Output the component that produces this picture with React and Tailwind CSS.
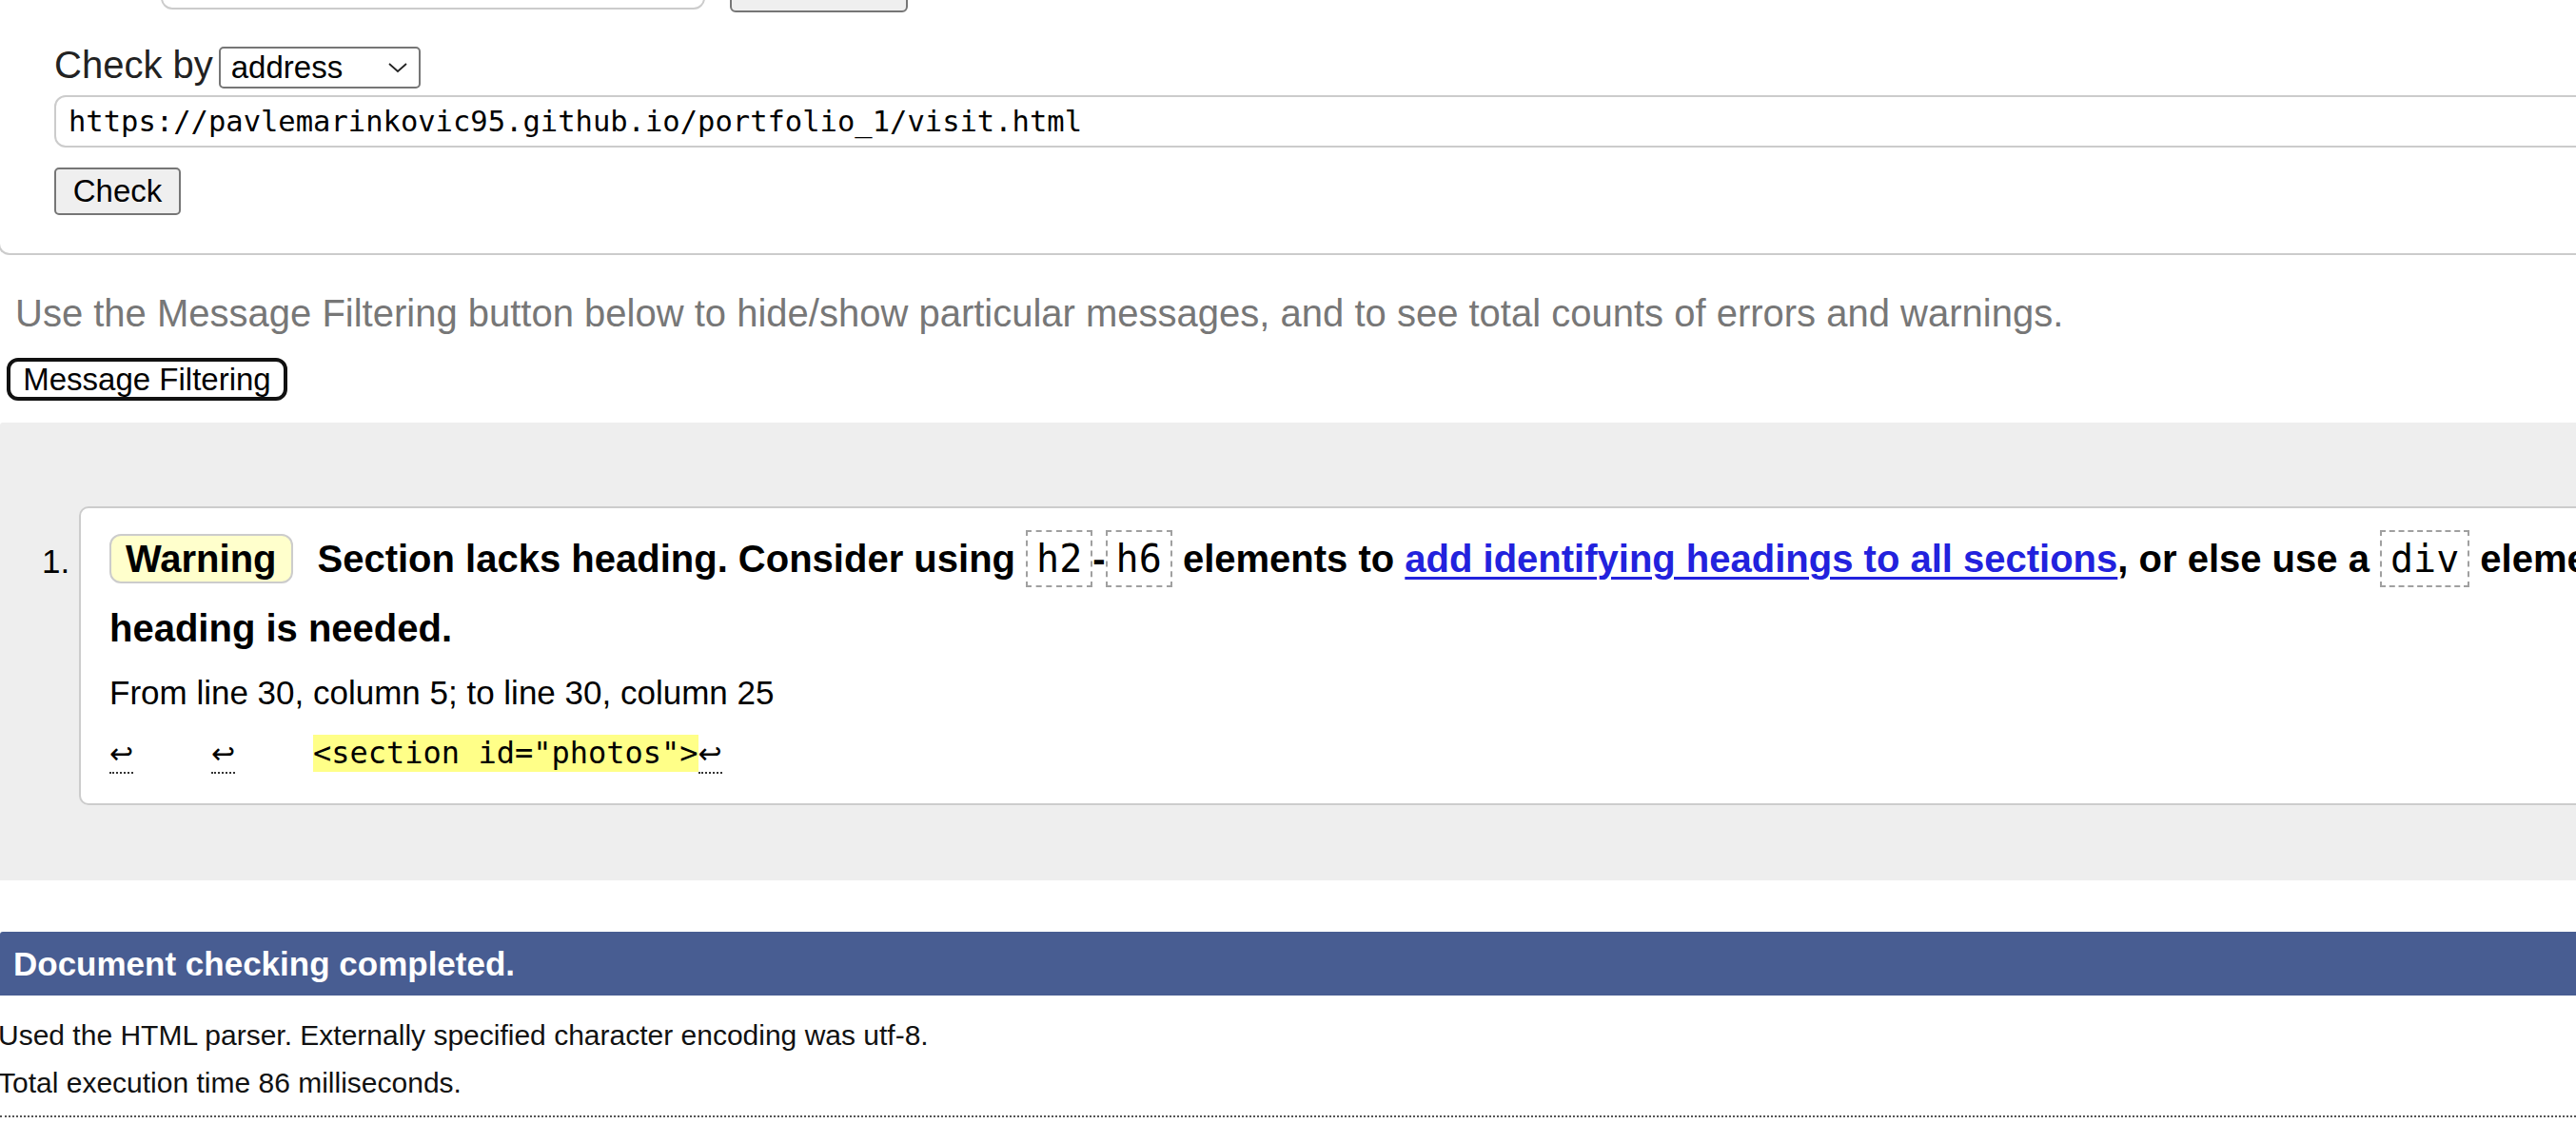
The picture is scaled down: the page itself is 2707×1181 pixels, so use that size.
import React from 'react';

const Code = ({ children }) => (
  <code className="inline-block border-2 border-dashed border-[#a0a0a0] px-[9px] leading-[56px] font-['DejaVu_Sans_Mono',monospace] font-normal text-[40px]">
    {children}
  </code>
);

const NewLine = ({ wide }) => (
  <span className={wide ? 'inline-block w-[107px]' : 'inline-block'}>
    <span className="inline-block h-[41px] border-b-2 border-dotted border-[#333] font-['DejaVu_Sans',sans-serif] text-[30px] leading-[39px]">
      ↩
    </span>
  </span>
);

export default function App() {
  return (
    <div className="w-[2707px] h-[1181px] overflow-hidden bg-white text-black font-['Liberation_Sans',Arial,sans-serif]">
      {/* form box */}
      <div className="-ml-[2px] border-b-2 border-l-2 border-[#ccc] rounded-bl-[12px] pb-[40px]">
        {/* previous row, scrolled mostly out of view */}
        <div className="flex items-end h-[13px] overflow-hidden pl-[169px]">
          <div className="w-[572px] h-[50px] mb-[3px] border-2 border-[#ccc] rounded-[12px] bg-white" />
          <div className="ml-[26px] w-[187px] h-[50px] border-2 border-[#767676] rounded-[6px] bg-[#efefef]" />
        </div>

        <div className="flex items-start mt-[36px] pl-[57px] h-[44px]">
          <span className="text-[40px] leading-[38px] text-[#222]">Check by</span>
          <div className="ml-[6px] w-[212px] h-[44px] border-2 border-[#767676] rounded-[5px] flex items-center justify-between pl-[11px] pr-[11px]">
            <span className="text-[33px] leading-[40px]">address</span>
            <svg width="22" height="14" viewBox="0 0 22 14" fill="none">
              <path d="M2 3l9 8 9-8" stroke="#222" strokeWidth="1.8" />
            </svg>
          </div>
        </div>

        <div className="mt-[7px] ml-[57px] w-[2800px] h-[55px] border-2 border-[#ccc] rounded-[12px] flex items-center pl-[13px]">
          <span className="font-['DejaVu_Sans_Mono',monospace] text-[30.5px] leading-[36px]">
            https://pavlemarinkovic95.github.io/portfolio_1/visit.html
          </span>
        </div>

        <div className="mt-[21px] ml-[57px] w-[133px] h-[50px] border-2 border-[#767676] rounded-[5px] bg-[#efefef] flex items-center justify-center">
          <span className="text-[33px] leading-[40px]">Check</span>
        </div>
      </div>

      <p className="mt-[41px] pl-[16px] text-[40px] leading-[40px] text-[#777] whitespace-nowrap">
        Use the Message Filtering button below to hide/show particular messages, and to see total counts of errors and warnings.
      </p>

      <div className="mt-[27px] ml-[7px] w-[295px] h-[45px] border-4 border-[#111] rounded-[12px] bg-white flex items-center justify-center">
        <span className="text-[33px] leading-[38px]">Message Filtering</span>
      </div>

      {/* results */}
      <div className="mt-[23px] h-[481px] bg-[#eee] pt-[88px] rounded-tl-[3px]">
        <div className="flex items-start">
          <div className="shrink-0 pl-[44px] w-[83px] mt-[38px] text-[35px] leading-[40px]">1.</div>
          <div className="shrink-0 w-[3600px] border-2 border-[#ccc] rounded-[10px] bg-white pl-[30px] pt-[17px] pb-[29px]">
            <p className="font-bold text-[40px] leading-[73px] whitespace-nowrap">
              <span className="inline-block mr-[26px] px-[15px] leading-[48px] bg-[#ffffcc] border-2 border-[#ccc] rounded-[12px]">
                Warning
              </span>
              Section lacks heading. Consider using <Code>h2</Code>-<Code>h6</Code> elements to{' '}
              <a className="text-[#2222dd] underline decoration-[3px] underline-offset-[5px]">
                add identifying headings to all sections
              </a>
              , or else use a <Code>div</Code> element instead for any cases where no
              <br />
              heading is needed.
            </p>
            <p className="mt-[11px] text-[35px] leading-[40px]">From line 30, column 5; to line 30, column 25</p>
            <div className="mt-[24px] flex items-start h-[43px] font-['DejaVu_Sans_Mono',monospace] text-[32px] leading-[39px]">
              <NewLine wide />
              <NewLine wide />
              <span className="bg-[#ffff88] whitespace-pre">&lt;section id="photos"&gt;</span>
              <NewLine />
            </div>
          </div>
        </div>
      </div>

      <div className="mt-[54px] h-[67px] bg-[#485d92] rounded-tl-[3px] flex items-center pl-[14px]">
        <span className="text-white font-bold text-[35px] leading-[40px]">Document checking completed.</span>
      </div>

      <p className="mt-[22px] -ml-[2px] text-[30px] leading-[40px] text-[#111] whitespace-nowrap">
        Used the HTML parser. Externally specified character encoding was utf-8.
      </p>
      <p className="mt-[10px] -ml-[2px] text-[30px] leading-[40px] text-[#111] whitespace-nowrap">
        Total execution time 86 milliseconds.
      </p>
      <div className="mt-[14px] border-b-2 border-dotted border-[#555]" />
    </div>
  );
}
